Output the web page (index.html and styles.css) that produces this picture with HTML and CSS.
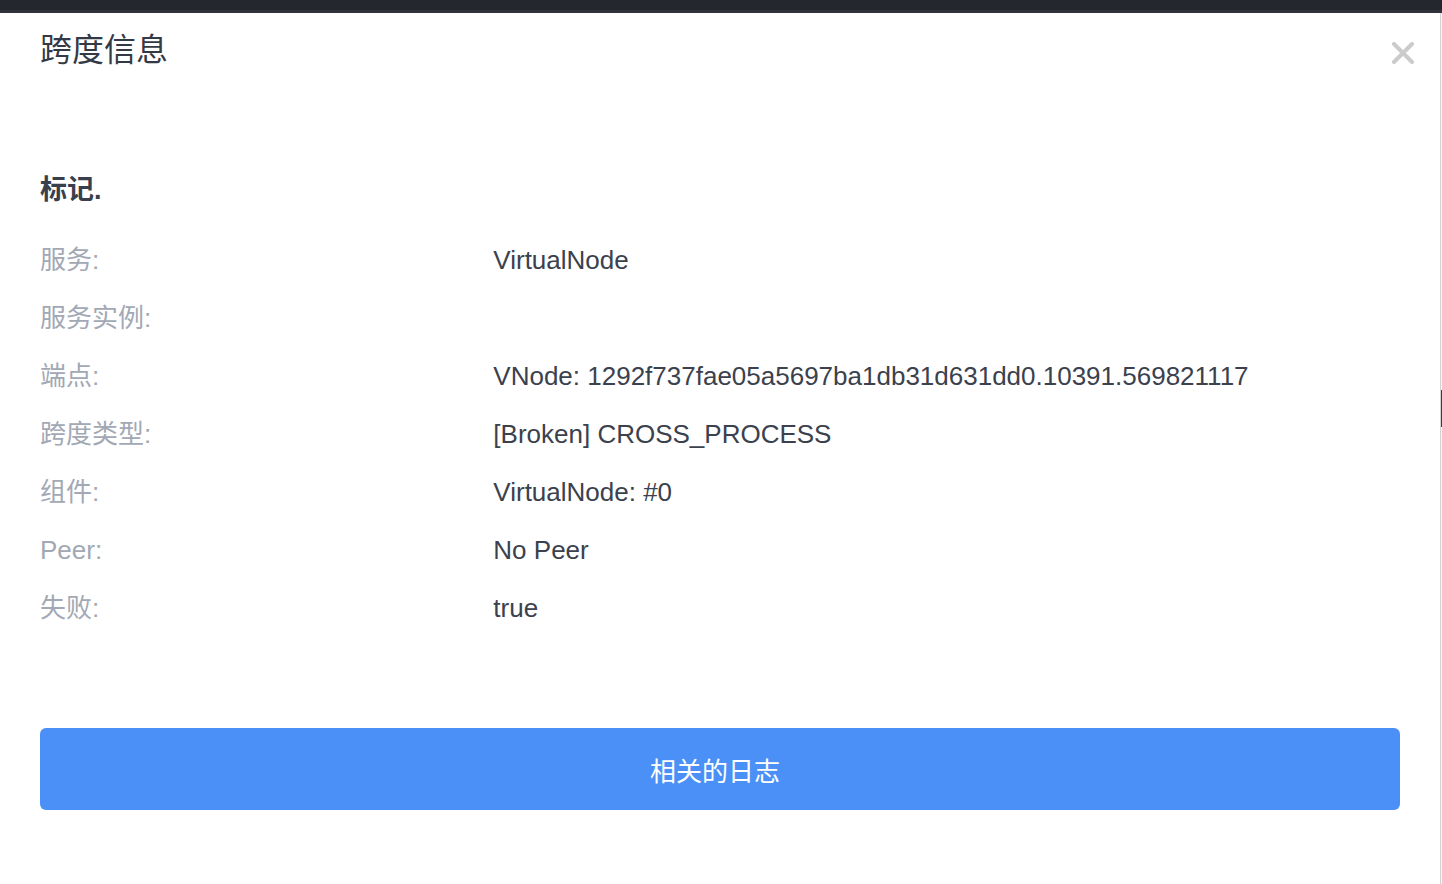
FILE: index.html
```html
<!DOCTYPE html>
<html lang="zh-CN">
<head>
<meta charset="UTF-8">
<meta name="viewport" content="width=device-width, initial-scale=1.0">
<title>跨度信息</title>
<link rel="stylesheet" href="styles.css">
</head>
<body>
<div class="topbar"></div>
<div class="stage">
  <div class="modal">
    <div class="modal-header">
      <h2 class="modal-title">跨度信息</h2>
      <button class="close" aria-label="close">
        <svg width="22" height="22" viewBox="0 0 22 22">
          <path d="M2 2 L20 20 M20 2 L2 20" stroke="#cbcbcb" stroke-width="4" stroke-linecap="round" fill="none"/>
        </svg>
      </button>
    </div>
    <div class="modal-body">
      <h3 class="section-title">标记.</h3>
      <div class="info-list">
        <div class="info-row"><span class="label">服务:</span><span class="value">VirtualNode</span></div>
        <div class="info-row"><span class="label">服务实例:</span><span class="value"></span></div>
        <div class="info-row"><span class="label">端点:</span><span class="value">VNode: 1292f737fae05a5697ba1db31d631dd0.10391.569821117</span></div>
        <div class="info-row"><span class="label">跨度类型:</span><span class="value">[Broken] CROSS_PROCESS</span></div>
        <div class="info-row"><span class="label">组件:</span><span class="value">VirtualNode: #0</span></div>
        <div class="info-row"><span class="label">Peer:</span><span class="value">No Peer</span></div>
        <div class="info-row"><span class="label">失败:</span><span class="value">true</span></div>
      </div>
      <button class="btn-logs">相关的日志</button>
    </div>
  </div>
  <div class="backdrop-edge"></div>
</div>
</body>
</html>
```
FILE: styles.css
```css
html, body {
    margin: 0;
    padding: 0;
    height: 100%;
    overflow: hidden;
}

body {
    background-color: #fff;
    font-family: "Liberation Sans", "Noto Sans CJK SC", sans-serif;
    color: #3b414d;
}

.topbar {
    height: 13px;
    background: linear-gradient(#24272d 0, #24272d 10px, #30333b 10px);
}

.stage {
    display: flex;
    height: calc(100% - 13px);
}

.modal {
    width: 1440px;
    background-color: #fff;
    padding: 15px 40px 0 40px;
    box-sizing: border-box;
}

/* thin strip of the page behind the dialog */
.backdrop-edge {
    width: 2px;
    border-left: 1px solid #d2d3d6;
    box-sizing: border-box;
    background: linear-gradient(#f4f5f7 0, #f4f5f7 377px, #3a3d45 377px, #3a3d45 414px, #f4f5f7 414px);
}

.modal-header {
    position: relative;
}

.modal-title {
    margin: 0;
    font-size: 32px;
    line-height: 44px;
    font-weight: normal;
    color: #343a45;
}

.close {
    position: absolute;
    right: -14px;
    top: 14px;
    border: none;
    background: none;
    padding: 0;
    width: 22px;
    height: 22px;
    cursor: pointer;
}

.close svg {
    display: block;
}

.section-title {
    margin: 98px 0 21px 0;
    font-size: 27px;
    line-height: 40px;
    font-weight: bold;
    color: #3a404b;
}

.info-row {
    display: grid;
    grid-template-columns: 1fr 2fr;
    height: 58px;
    line-height: 58px;
    font-size: 26px;
}

.label {
    color: #a2a8b4;
}

.value {
    color: #3b414d;
}

.btn-logs {
    display: block;
    width: 100%;
    height: 82px;
    margin-top: 91px;
    padding: 0 10px 0 0;
    border: none;
    border-radius: 6px;
    background-color: #4a90f7;
    color: #fff;
    font-family: "Liberation Sans", "Noto Sans CJK SC", sans-serif;
    font-size: 26px;
    cursor: pointer;
}
```
